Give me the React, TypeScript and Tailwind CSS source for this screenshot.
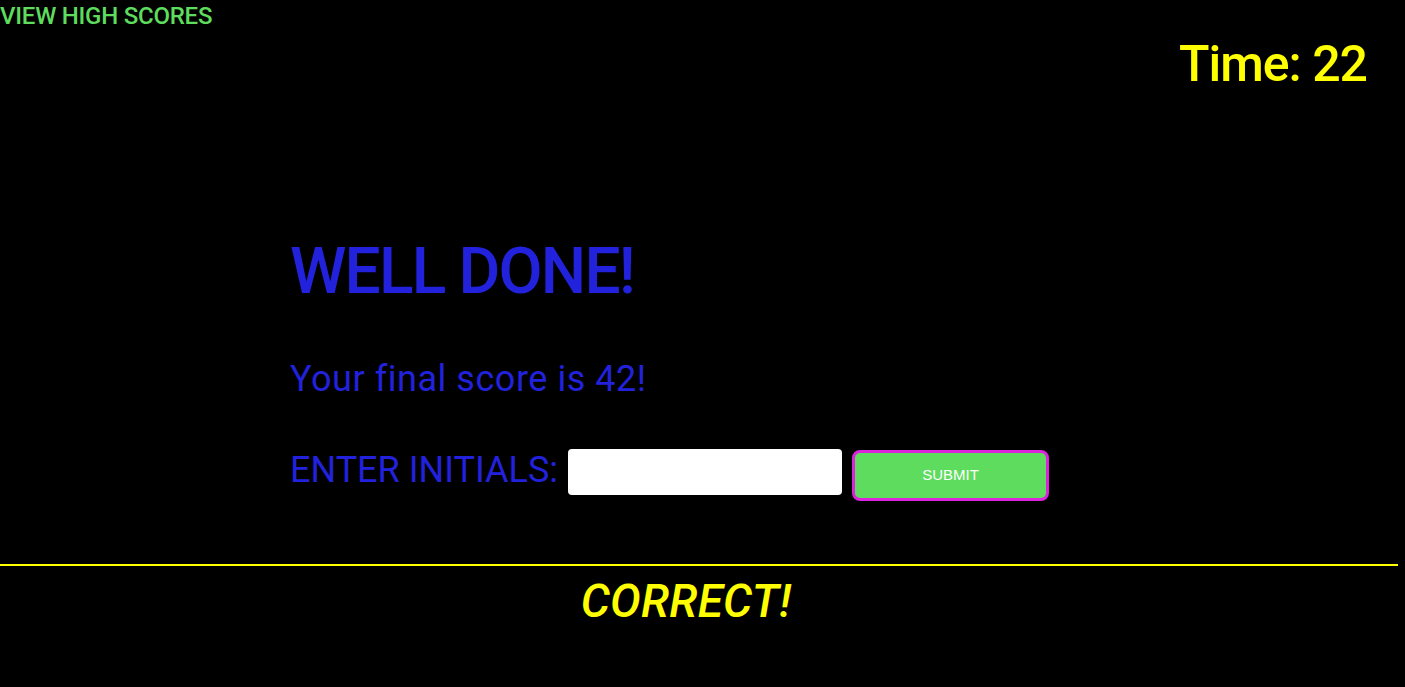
export default function App() {
  return (
    <div className="min-h-[687px] w-full bg-black font-['Roboto',sans-serif]">
      <div className="flex items-start justify-between">
        <a className="mt-[2px] text-[24px] leading-[28px] font-medium tracking-[-0.01em] text-[#5ddc5d]">VIEW HIGH SCORES</a>
        <div className="mr-[38px] mt-[34px] text-[50px] leading-[60px] font-medium tracking-[-0.02em] text-[#ffff00]">Time: 22</div>
      </div>

      <div className="ml-[290px] mt-[140px] flex flex-col items-start">
        <h1 className="text-[64px] leading-[76px] font-medium tracking-[-0.028em] text-[#2222dd]">WELL DONE!</h1>
        <p className="mt-[48px] text-[36px] leading-[42px] tracking-[0.015em] text-[#2222dd]">Your final score is 42!</p>
        <div className="mt-[43px] flex items-start">
          <label className="mt-[6px] text-[36px] leading-[42px] tracking-[0em] text-[#2222dd]">ENTER INITIALS:</label>
          <input className="ml-[10px] mt-[6px] h-[46px] w-[274px] rounded-[4px] bg-white px-2 text-black outline-none" />
          <button className="ml-[10px] mt-[7px] h-[51px] w-[197px] rounded-[8px] border-[3px] border-[#dd22dd] bg-[#5ddc5d] font-['Liberation_Sans',sans-serif] text-[15px] text-white">
            SUBMIT
          </button>
        </div>
      </div>

      <div className="mt-[63px] w-[1398px] border-t-2 border-[#ffff00]">
        <p className="mt-[8px] pr-[26px] text-center text-[46px] leading-[54px] font-medium italic tracking-[0.005em] text-[#ffff00]">CORRECT!</p>
      </div>
    </div>
  );
}
